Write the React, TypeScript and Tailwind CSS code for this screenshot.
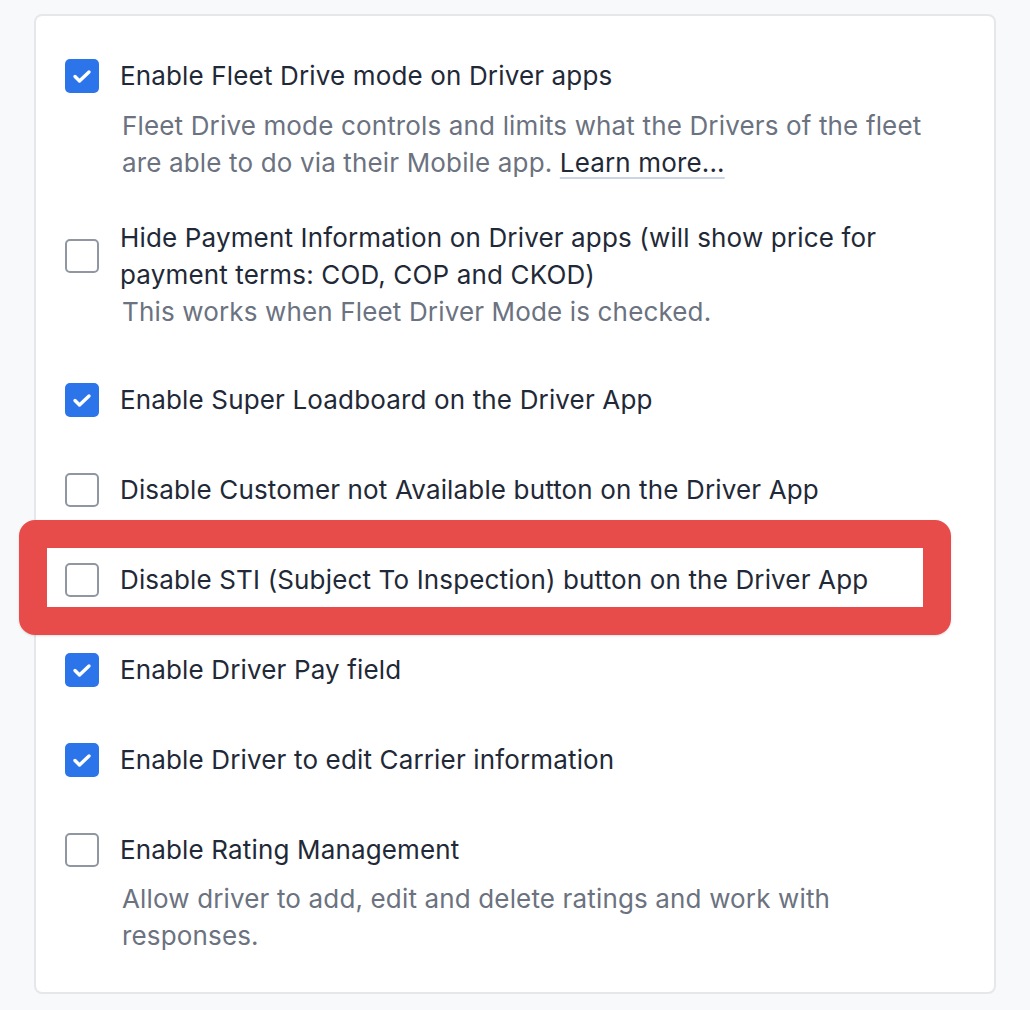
import type { ReactNode } from 'react';

type Setting = {
  label: ReactNode;
  checked: boolean;
  description?: ReactNode;
  descGap?: string;
  rowGap: string;
  highlight?: boolean;
};

const settings: Setting[] = [
  {
    label: 'Enable Fleet Drive mode on Driver apps',
    checked: true,
    description: (
      <>
        Fleet Drive mode controls and limits what the Drivers of the fleet are able to do via their Mobile app.{' '}
        <a className="text-[#1f2937] underline decoration-[#cbd5e1] decoration-2 underline-offset-[5px]">
          Learn more...
        </a>
      </>
    ),
    descGap: 'mt-[13px]',
    rowGap: 'mt-0',
  },
  {
    label: 'Hide Payment Information on Driver apps (will show price for payment terms: COD, COP and CKOD)',
    checked: false,
    description: 'This works when Fleet Driver Mode is checked.',
    descGap: 'mt-0',
    rowGap: 'mt-[38px]',
  },
  { label: 'Enable Super Loadboard on the Driver App', checked: true, rowGap: 'mt-[51px]' },
  { label: 'Disable Customer not Available button on the Driver App', checked: false, rowGap: 'mt-[53px]' },
  {
    label: 'Disable STI (Subject To Inspection) button on the Driver App',
    checked: false,
    rowGap: 'mt-[53px]',
    highlight: true,
  },
  { label: 'Enable Driver Pay field', checked: true, rowGap: 'mt-[53px]' },
  { label: 'Enable Driver to edit Carrier information', checked: true, rowGap: 'mt-[53px]' },
  {
    label: 'Enable Rating Management',
    checked: false,
    description: 'Allow driver to add, edit and delete ratings and work with responses.',
    descGap: 'mt-[12px]',
    rowGap: 'mt-[53px]',
  },
];

function Checkbox({ checked }: { checked: boolean }) {
  if (checked) {
    return (
      <span className="flex h-[34px] w-[34px] shrink-0 items-center justify-center rounded-[5px] bg-[#2b74ea]">
        <svg width="34" height="34" viewBox="0 0 34 34" fill="none">
          <polyline
            points="10,17.5 14.5,22 24,13"
            stroke="white"
            strokeWidth="3.4"
            strokeLinecap="round"
            strokeLinejoin="round"
          />
        </svg>
      </span>
    );
  }
  return <span className="h-[34px] w-[34px] shrink-0 rounded-[5px] border-2 border-[#9097a3] bg-white" />;
}

export default function App() {
  return (
    <div
      className="min-h-[1010px] bg-[#f8f9fa] pl-[34px] pt-[14px]"
      style={{ fontFamily: 'Inter, "Noto Sans", sans-serif' }}
    >
      <div className="w-[962px] rounded-[8px] border-2 border-[#e5e7eb] bg-white pb-[38px] pl-[29px] pr-[56px] pt-[41px]">
        {settings.map((s, i) => (
          <div key={i} className={s.rowGap}>
            <div className="relative flex items-center gap-[21px]">
              <Checkbox checked={s.checked} />
              <span className="text-[26px] leading-[37px] tracking-[0.15px] text-[#1f2937]">{s.label}</span>
              {s.highlight && (
                <div className="pointer-events-none absolute bottom-[-37px] left-[-46px] right-[-13px] top-[-41px] rounded-[16px] border-[28px] border-[#e74c4a] shadow-sm" />
              )}
            </div>
            {s.description && (
              <p className={`${s.descGap} pl-[57px] text-[26px] leading-[37px] tracking-[0.15px] text-[#6b7280]`}>
                {s.description}
              </p>
            )}
          </div>
        ))}
      </div>
    </div>
  );
}
